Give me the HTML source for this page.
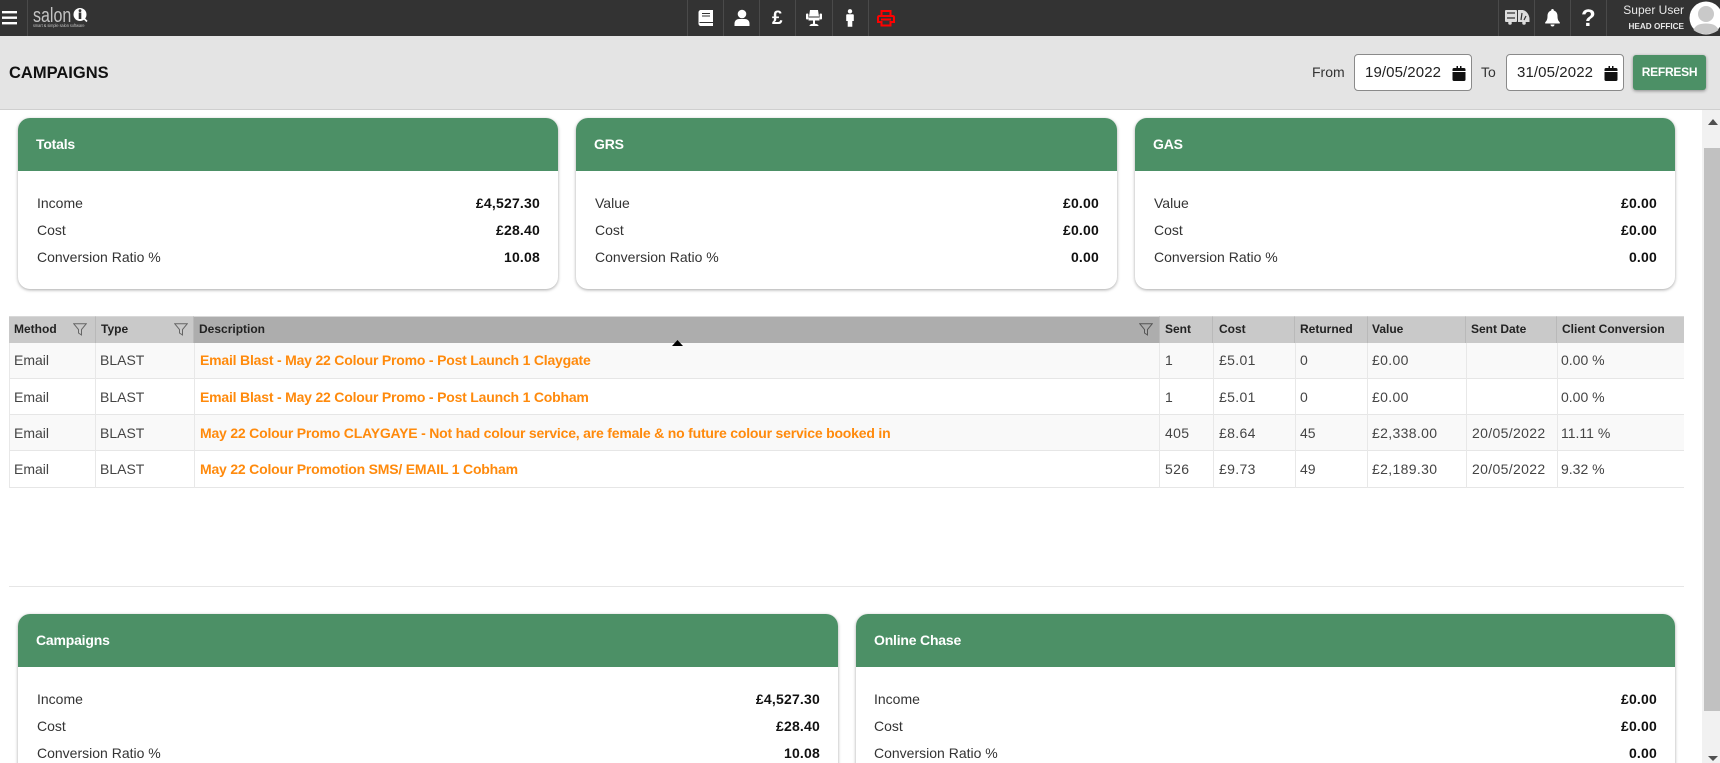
<!DOCTYPE html>
<html><head><meta charset="utf-8"><title>Campaigns</title>
<style>
*{box-sizing:border-box}
html,body{margin:0;padding:0;width:1720px;height:763px;overflow:hidden;background:#fff;font-family:"Liberation Sans",sans-serif;color:#333}
#w{position:absolute;left:0;top:0;width:1720px;height:763px;overflow:hidden;background:#fff}
.a{position:absolute;white-space:nowrap}
.topbar{position:absolute;left:0;top:0;width:1720px;height:36px;background:#333}
.sep{position:absolute;top:0;width:1px;height:36px;background:#4a4a4a}
.sub{position:absolute;left:0;top:36px;width:1720px;height:74px;background:#e4e4e4;border-bottom:1px solid #cfcfcf}
.date{position:absolute;top:54px;width:118px;height:37px;background:#fff;border:1px solid #8a8a8a;border-radius:4px;font-size:15px;letter-spacing:.1px;line-height:35px;padding-left:10px;color:#222}
.date svg{position:absolute;left:97px;top:11px}
.card{position:absolute;background:#fff;border-radius:12px;box-shadow:0 1px 3px rgba(0,0,0,.35);overflow:hidden}
.card .h{position:absolute;left:0;top:0;right:0;height:53px;background:#4c9066;color:#fff;font-weight:bold;font-size:14px;line-height:52px;padding-left:18px;letter-spacing:-.2px}
.l{position:absolute;left:19px;font-size:14px;line-height:20px;color:#333;white-space:nowrap}
.v{position:absolute;right:18px;font-size:14px;letter-spacing:.2px;line-height:20px;font-weight:bold;color:#111;white-space:nowrap}
.th{position:absolute;top:316px;height:27px;background:#c9c9c9;border-right:1px solid #b9b9b9;border-top:1px solid #d8d8d8;font-size:12px;font-weight:bold;line-height:25px;padding-left:5px;color:#222;white-space:nowrap}
.row{position:absolute;left:9px;width:1675px;height:36px;border-bottom:1px solid #e6e6e6}
.vl{position:absolute;top:343px;width:1px;height:145px;background:#e8e8e8}
.td{position:absolute;font-size:14px;line-height:20px;color:#444;white-space:nowrap}
.n{letter-spacing:.35px}
.o{position:absolute;left:200px;font-size:14px;letter-spacing:-.2px;line-height:20px;font-weight:bold;color:#ff8a0c;white-space:nowrap}
</style></head><body><div id="w">

<div class="topbar">
 <svg class="a" style="left:2px;top:11px" width="16" height="14"><rect width="15" height="2.4" y="0" fill="#fff"/><rect width="15" height="2.4" y="5.5" fill="#fff"/><rect width="15" height="2.4" y="11" fill="#fff"/></svg>
 <div class="sep" style="left:27px"></div>
 <div class="a" style="left:33px;top:5px;font-size:20px;line-height:22px;color:#c4c4c4;transform:scaleX(.8);transform-origin:0 0">salon</div>
 <svg class="a" style="left:73px;top:7px" width="15" height="16"><circle cx="7" cy="7.500" r="6.500" fill="#fff"/><rect x="5.700" y="5.500" width="2.600" height="6.500" fill="#333"/><circle cx="7" cy="3.600" r="1.400" fill="#333"/><path d="M11 11.500l3 3" stroke="#fff" stroke-width="1.600"/></svg>
 <div class="a" style="left:33px;top:23px;font-size:4.400px;line-height:6px;color:#c4c4c4;transform:scaleX(.88);transform-origin:0 0">smart &amp; simple salon software</div>

 <div class="sep" style="left:687px"></div><div class="sep" style="left:723px"></div><div class="sep" style="left:759px"></div><div class="sep" style="left:795px"></div><div class="sep" style="left:832px"></div><div class="sep" style="left:868px"></div>
 <svg class="a" style="left:698px;top:9px" width="16" height="18" viewBox="0 0 16 18"><path d="M3 1h12v16H3C1.500 17 .5 16 .5 14.500V3.500C.5 2 1.500 1 3 1z" fill="#fff"/><path d="M4 4.500h8M4 7h8M1.500 13.500H15" stroke="#333" stroke-width="1"/></svg>
 <svg class="a" style="left:734px;top:9px" width="16" height="18" viewBox="0 0 16 18"><circle cx="8" cy="5" r="4.300" fill="#fff"/><path d="M.5 17v-2.500C.5 11.500 3 10 5 10h6c2 0 4.500 1.500 4.500 4.500V17z" fill="#fff"/></svg>
 <div class="a" style="left:772px;top:8px;font-size:19px;line-height:22px;font-weight:bold;color:#fff">£</div>
 <svg class="a" style="left:806px;top:9px" width="16" height="18" viewBox="0 0 16 18"><path d="M4 1h8l1 6.500H3z" fill="#fff"/><rect x="0" y="4.500" width="2.400" height="6" rx="1" fill="#fff"/><rect x="13.600" y="4.500" width="2.400" height="6" rx="1" fill="#fff"/><rect x="2.500" y="8.500" width="11" height="3" fill="#fff"/><rect x="7" y="11.500" width="2" height="3.500" fill="#fff"/><path d="M3.500 17c0-1.500 2-2.200 4.500-2.200s4.500.7 4.500 2.200z" fill="#fff"/></svg>
 <svg class="a" style="left:846px;top:9px" width="8" height="18" viewBox="0 0 8 18"><circle cx="4" cy="2.300" r="2.200" fill="#fff"/><path d="M1.200 5.300h5.600c.6 0 1 .4 1 1V12H6.300v5.800H1.700V12H.2V6.300c0-.6.4-1 1-1z" fill="#fff"/></svg>
 <svg class="a" style="left:877px;top:9px" width="18" height="18" viewBox="0 0 18 18"><path d="M4.500 7V2h9v5M1 8.500C1 7.500 1.700 7 2.500 7h13c.8 0 1.500.5 1.500 1.500V13h-3.500v3.500h-9V13H1z" fill="none" stroke="#f00" stroke-width="2"/><path d="M4 10.500h10" stroke="#f00" stroke-width="2"/></svg>

 <div class="sep" style="left:1498px"></div><div class="sep" style="left:1534px"></div><div class="sep" style="left:1570px"></div><div class="sep" style="left:1606px"></div>
 <svg class="a" style="left:1505px;top:9px" width="25" height="16" viewBox="0 0 25 16"><rect x="0" y="1" width="12" height="12" rx="1" fill="#ddd"/><path d="M2 4h8M2 9h8" stroke="#333" stroke-width="1.200"/><path d="M13 1h4c4 0 7 4 7.500 8.500V13H13z" fill="#ddd"/><path d="M17 4l-1 7M21 7l-2 4" stroke="#333" stroke-width="1.200"/><circle cx="5" cy="14" r="1.800" fill="#ddd"/><circle cx="19" cy="14" r="1.800" fill="#ddd"/></svg>
 <svg class="a" style="left:1545px;top:9px" width="15" height="18" viewBox="0 0 15 18"><path d="M7.500 0c1 0 1.300.6 1.300 1.500C11 2.200 12.500 4 12.500 7c0 3.500.8 4.800 2.300 6.300v1.200H.2v-1.200C1.700 11.800 2.500 10.500 2.500 7c0-3 1.500-4.800 3.700-5.500C6.200.6 6.500 0 7.500 0z" fill="#fff"/><path d="M5.500 15.500h4c0 1.300-.9 2-2 2s-2-.7-2-2z" fill="#fff"/></svg>
 <div class="a" style="left:1581px;top:6px;font-size:24px;line-height:26px;font-weight:bold;color:#fff">?</div>
 <div class="a" style="right:36px;top:2px;font-size:12px;line-height:16px;color:#e8e8e8">Super User</div>
 <div class="a" style="right:36px;top:21px;font-size:8.200px;line-height:12px;font-weight:bold;color:#e8e8e8">HEAD OFFICE</div>
 <svg class="a" style="left:1689px;top:0" width="31" height="36" viewBox="0 0 31 36"><circle cx="17" cy="18" r="16.500" fill="#fff"/><circle cx="17" cy="14" r="8" fill="#c9c9c9"/><path d="M4.500 30c2-5 6-6.500 12.500-6.500S27.500 25 29.500 30C26 33 21.500 34 17 34S8 33 4.500 30z" fill="#c9c9c9"/></svg>
</div>

<div class="sub"></div>
<div class="a" style="left:9px;top:63px;font-size:16.500px;line-height:20px;font-weight:bold;color:#111">CAMPAIGNS</div>
<div class="a" style="left:1312px;top:62px;font-size:14px;line-height:20px;color:#333">From</div>
<div class="date" style="left:1354px">19/05/2022<svg width="14" height="15" viewBox="0 0 14 15"><path d="M2 2h2.500V0h1.500v2h2V0h1.500v2H12a1.500 1.500 0 0 1 1.500 1.500V5H.5V3.500A1.500 1.500 0 0 1 2 2zM.5 6h13v7.500A1.500 1.500 0 0 1 12 15H2a1.500 1.500 0 0 1-1.500-1.500z" fill="#111"/></svg></div>
<div class="a" style="left:1481px;top:62px;font-size:14px;line-height:20px;color:#333">To</div>
<div class="date" style="left:1506px">31/05/2022<svg width="14" height="15" viewBox="0 0 14 15"><path d="M2 2h2.500V0h1.500v2h2V0h1.500v2H12a1.500 1.500 0 0 1 1.500 1.500V5H.5V3.500A1.500 1.500 0 0 1 2 2zM.5 6h13v7.500A1.500 1.500 0 0 1 12 15H2a1.500 1.500 0 0 1-1.500-1.500z" fill="#111"/></svg></div>
<div class="a" style="left:1633px;top:55px;width:73px;height:35px;background:#4c9066;border-radius:3px;box-shadow:0 1px 3px rgba(0,0,0,.4);color:#fff;font-size:12px;letter-spacing:-.25px;font-weight:bold;text-align:center;line-height:34px">REFRESH</div>

<!-- scrollbar -->
<div class="a" style="left:1702px;top:110px;width:18px;height:653px;background:#f1f1f1"></div>
<div class="a" style="left:1704px;top:148px;width:16px;height:563px;background:#c1c1c1"></div>
<svg class="a" style="left:1708px;top:119px" width="10" height="6"><path d="M0 6L5 0l5 6z" fill="#505050"/></svg>
<svg class="a" style="left:1708px;top:756px" width="10" height="5"><path d="M0 0l5 5 5-5z" fill="#505050"/></svg>

<!-- top cards -->
<div class="card" style="left:18px;top:118px;width:540px;height:171px"><div class="h">Totals</div>
 <div class="l" style="top:75px">Income</div><div class="v" style="top:75px">£4,527.30</div>
 <div class="l" style="top:102px">Cost</div><div class="v" style="top:102px">£28.40</div>
 <div class="l" style="top:129px">Conversion Ratio %</div><div class="v" style="top:129px">10.08</div></div>
<div class="card" style="left:576px;top:118px;width:541px;height:171px"><div class="h">GRS</div>
 <div class="l" style="top:75px">Value</div><div class="v" style="top:75px">£0.00</div>
 <div class="l" style="top:102px">Cost</div><div class="v" style="top:102px">£0.00</div>
 <div class="l" style="top:129px">Conversion Ratio %</div><div class="v" style="top:129px">0.00</div></div>
<div class="card" style="left:1135px;top:118px;width:540px;height:171px"><div class="h">GAS</div>
 <div class="l" style="top:75px">Value</div><div class="v" style="top:75px">£0.00</div>
 <div class="l" style="top:102px">Cost</div><div class="v" style="top:102px">£0.00</div>
 <div class="l" style="top:129px">Conversion Ratio %</div><div class="v" style="top:129px">0.00</div></div>

<!-- table -->
<div class="th" style="left:9px;width:87px">Method<svg class="a" style="left:64px;top:6px" width="14" height="13" viewBox="0 0 14 13"><path d="M.7.7h12.600L8.500 6.500V12L5.500 10V6.500z" fill="none" stroke="#666" stroke-width="1"/></svg></div>
<div class="th" style="left:96px;width:98px">Type<svg class="a" style="left:78px;top:6px" width="14" height="13" viewBox="0 0 14 13"><path d="M.7.7h12.600L8.500 6.500V12L5.500 10V6.500z" fill="none" stroke="#666" stroke-width="1"/></svg></div>
<div class="th" style="left:194px;width:966px;background:#adadad">Description<svg class="a" style="left:945px;top:6px" width="14" height="13" viewBox="0 0 14 13"><path d="M.7.7h12.600L8.500 6.500V12L5.500 10V6.500z" fill="none" stroke="#555" stroke-width="1"/></svg></div>
<div class="th" style="left:1160px;width:53px">Sent</div>
<div class="th" style="left:1213px;width:82px;padding-left:6px">Cost</div>
<div class="th" style="left:1295px;width:73px">Returned</div>
<div class="th" style="left:1368px;width:98px;padding-left:4px">Value</div>
<div class="th" style="left:1466px;width:91px">Sent Date</div>
<div class="th" style="left:1557px;width:127px;border-right:0">Client Conversion</div>

<div class="row" style="top:343px;background:#f9f9f9"></div>
<div class="row" style="top:379px;background:#fff"></div>
<div class="row" style="top:415px;background:#f9f9f9"></div>
<div class="row" style="top:451px;height:37px;background:#fff"></div>
<div class="vl" style="left:9px"></div><div class="vl" style="left:95px"></div><div class="vl" style="left:194px"></div><div class="vl" style="left:1159px"></div><div class="vl" style="left:1213px"></div><div class="vl" style="left:1295px"></div><div class="vl" style="left:1367px"></div><div class="vl" style="left:1466px"></div><div class="vl" style="left:1557px"></div>
<svg class="a" style="left:672px;top:340px" width="11" height="6"><path d="M0 6L5.500 0 11 6z" fill="#000"/></svg>

<div class="td" style="left:14px;top:350px">Email</div><div class="td" style="left:100px;top:350px">BLAST</div>
<div class="o" style="top:350px">Email Blast - May 22 Colour Promo - Post Launch 1 Claygate</div>
<div class="td" style="left:1165px;top:350px">1</div><div class="td n" style="left:1219px;top:350px">£5.01</div><div class="td" style="left:1300px;top:350px">0</div><div class="td n" style="left:1372px;top:350px">£0.00</div><div class="td" style="left:1561px;top:350px">0.00 %</div>

<div class="td" style="left:14px;top:387px">Email</div><div class="td" style="left:100px;top:387px">BLAST</div>
<div class="o" style="top:387px">Email Blast - May 22 Colour Promo - Post Launch 1 Cobham</div>
<div class="td" style="left:1165px;top:387px">1</div><div class="td n" style="left:1219px;top:387px">£5.01</div><div class="td" style="left:1300px;top:387px">0</div><div class="td n" style="left:1372px;top:387px">£0.00</div><div class="td" style="left:1561px;top:387px">0.00 %</div>

<div class="td" style="left:14px;top:423px">Email</div><div class="td" style="left:100px;top:423px">BLAST</div>
<div class="o" style="top:423px">May 22 Colour Promo CLAYGAYE - Not had colour service, are female &amp; no future colour service booked in</div>
<div class="td n" style="left:1165px;top:423px">405</div><div class="td n" style="left:1219px;top:423px">£8.64</div><div class="td" style="left:1300px;top:423px">45</div><div class="td n" style="left:1372px;top:423px">£2,338.00</div><div class="td n" style="left:1472px;top:423px">20/05/2022</div><div class="td" style="left:1561px;top:423px">11.11 %</div>

<div class="td" style="left:14px;top:459px">Email</div><div class="td" style="left:100px;top:459px">BLAST</div>
<div class="o" style="top:459px">May 22 Colour Promotion SMS/ EMAIL 1 Cobham</div>
<div class="td n" style="left:1165px;top:459px">526</div><div class="td n" style="left:1219px;top:459px">£9.73</div><div class="td" style="left:1300px;top:459px">49</div><div class="td n" style="left:1372px;top:459px">£2,189.30</div><div class="td n" style="left:1472px;top:459px">20/05/2022</div><div class="td" style="left:1561px;top:459px">9.32 %</div>

<div class="a" style="left:9px;top:586px;width:1675px;height:1px;background:#e6e6e6"></div>

<!-- bottom cards -->
<div class="card" style="left:18px;top:614px;width:820px;height:171px"><div class="h">Campaigns</div>
 <div class="l" style="top:75px">Income</div><div class="v" style="top:75px">£4,527.30</div>
 <div class="l" style="top:102px">Cost</div><div class="v" style="top:102px">£28.40</div>
 <div class="l" style="top:129px">Conversion Ratio %</div><div class="v" style="top:129px">10.08</div></div>
<div class="card" style="left:856px;top:614px;width:819px;height:171px"><div class="h">Online Chase</div>
 <div class="l" style="top:75px;left:18px">Income</div><div class="v" style="top:75px">£0.00</div>
 <div class="l" style="top:102px;left:18px">Cost</div><div class="v" style="top:102px">£0.00</div>
 <div class="l" style="top:129px;left:18px">Conversion Ratio %</div><div class="v" style="top:129px">0.00</div></div>

</div></body></html>
